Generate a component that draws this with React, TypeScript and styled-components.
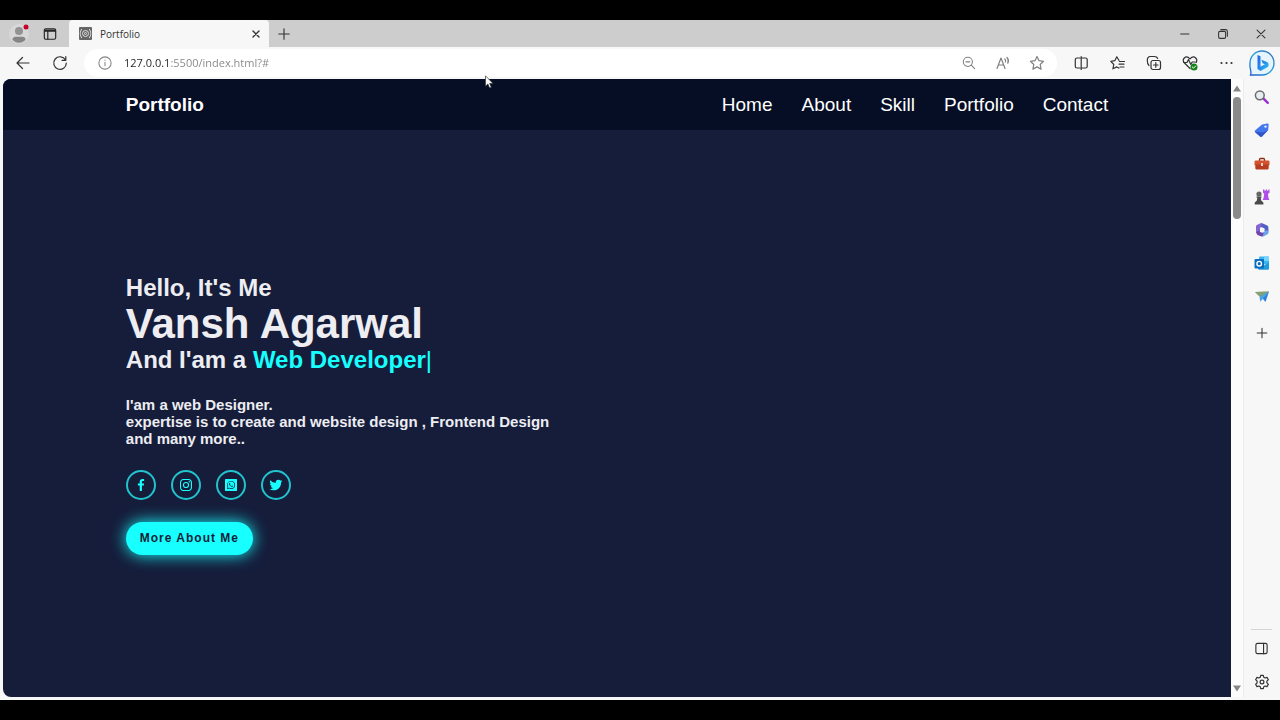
import React from 'react';
import styled, { createGlobalStyle } from 'styled-components';
import { BiLogoFacebook, BiLogoInstagram, BiLogoTwitter, BiLogoWhatsappSquare } from 'react-icons/bi';

const GlobalStyle = createGlobalStyle`
  * { box-sizing: border-box; }
  body { margin: 0; background: #000; }
  button { border: 0; padding: 0; background: none; color: inherit; font: inherit; cursor: pointer; }
  a { color: inherit; text-decoration: none; }
  svg { display: block; flex: none; }
`;

const Frame = styled.div`
  position: relative;
  display: flex;
  flex-direction: column;
  min-height: 100vh;
  padding: 20px 0;
  background: #000;
  color: #333;
  font-family: "Open Sans", "Noto Sans", sans-serif;
`;

const TabStrip = styled.header`
  display: flex;
  height: 27px;
  background: #cdcdcd;
`;

const StripTools = styled.div`
  display: flex;
  align-items: center;
  width: 69px;
  padding-left: 8px;
  gap: 13px;
`;

const Tab = styled.div`
  display: flex;
  align-items: center;
  width: 200px;
  padding: 0 6px 0 10px;
  gap: 8px;
  border-radius: 4px 4px 0 0;
  background: #f7f7f7;
  font-size: 10px;
  line-height: 14px;
`;

const TabTitle = styled.span`
  flex: 1;
`;

const IconButton = styled.button<{ $width?: number; $color?: string }>`
  display: flex;
  flex: none;
  align-items: center;
  justify-content: center;
  width: ${({ $width = 36 }) => $width}px;
  height: 100%;
  color: ${({ $color = '#333' }) => $color};
`;

const WindowControls = styled.div`
  display: flex;
  margin-left: auto;
`;

const Body = styled.div`
  display: flex;
  flex: 1;
  background: #f7f7f7;
`;

const Main = styled.div`
  display: flex;
  flex: 1;
  flex-direction: column;
  min-width: 0;
`;

const Toolbar = styled.div`
  display: flex;
  align-items: center;
  height: 32px;
  padding-left: 4px;
`;

const AddressBar = styled.div`
  display: flex;
  flex: 1;
  align-items: center;
  height: 28px;
  margin: 0 7px 0 6px;
  padding: 0 3px 0 14px;
  border-radius: 14px;
  background: #fff;
  color: #858585;
`;

const AddressInput = styled.input`
  flex: 1;
  min-width: 0;
  margin-left: 12px;
  padding: 0;
  border: 0;
  outline: 0;
  background: linear-gradient(90deg, #222 45px, #858585 45px);
  background-clip: text;
  -webkit-background-clip: text;
  -webkit-text-fill-color: transparent;
  color: #858585;
  font: 11px/16px "Open Sans", "Noto Sans", sans-serif;
`;

const Viewport = styled.div`
  display: flex;
  flex: 1;
  padding: 0 0 3px 3px;
`;

const Page = styled.div`
  display: flex;
  flex: 1;
  flex-direction: column;
  overflow: hidden;
  border-radius: 8px 0 0 8px;
  background: #151d3b;
  color: #ededf2;
  font-family: "Liberation Sans", Arial, sans-serif;
`;

const PageHeader = styled.div`
  display: flex;
  align-items: center;
  justify-content: space-between;
  height: 51px;
  padding: 1px 10% 0;
  background: #050e25;
  color: #fff;
  font-size: 19px;
  line-height: 22px;
`;

const Brand = styled.a`
  font-weight: 700;
`;

const Nav = styled.nav`
  display: flex;
  gap: 29px;
`;

const Hero = styled.main`
  display: flex;
  flex: 1;
  flex-direction: column;
  align-items: flex-start;
  justify-content: center;
  padding: 2px 10% 0;
`;

const Greeting = styled.h2`
  margin: 0;
  font-size: 24px;
  line-height: 26px;
`;

const Name = styled.h1`
  margin: 0;
  font-size: 42px;
  line-height: 46px;
`;

const Typed = styled.span`
  color: #17ffff;
`;

const Caret = styled.span`
  font-weight: 400;
`;

const Intro = styled.p`
  margin: 23px 0;
  font-size: 15px;
  font-weight: 700;
  line-height: 17px;
`;

const Socials = styled.div`
  display: flex;
  gap: 15px;
`;

const SocialLink = styled.a`
  display: flex;
  align-items: center;
  justify-content: center;
  width: 30px;
  height: 30px;
  border: 2px solid #22c3cd;
  border-radius: 50%;
  color: #17ffff;
`;

const MoreLink = styled.a`
  margin-top: 22px;
  padding: 9px 14px;
  border-radius: 17px;
  background: #17ffff;
  box-shadow: 0 0 16px #17ffff;
  color: #131d3a;
  font-size: 12px;
  font-weight: 700;
  letter-spacing: 1px;
  line-height: 15px;
`;

const ScrollTrack = styled.div`
  display: flex;
  flex-direction: column;
  align-items: center;
  width: 13px;
  padding: 6px 0 5px;
  border-right: 1px solid #ececec;
  background: #fcfcfc;
  color: #858585;
`;

const ScrollThumb = styled.div`
  width: 8px;
  height: 122px;
  margin: 5px 0 auto;
  border-radius: 4px;
  background: #8a8a8a;
`;

const SideBar = styled.aside`
  display: flex;
  flex-direction: column;
  width: 36px;
  padding-bottom: 2px;
`;

const SideSlot = styled.div<{ $height?: number }>`
  height: ${({ $height = 33 }) => $height}px;
`;

const AppList = styled.div`
  padding: 2px 0 4px;
`;

const SideFooter = styled.div`
  margin: auto 8px 0 7px;
  border-top: 1px solid #d5d5d5;
  padding-top: 2px;
  display: flex;
  flex-direction: column;
  align-items: center;
`;

const Pointer = styled.svg`
  position: absolute;
  left: 485px;
  top: 75px;
  pointer-events: none;
`;

type LineProps = { size?: number; width?: number; children: React.ReactNode };
const Line = ({ size = 16, width = 1.2, children }: LineProps) => (
  <svg width={size} height={size} viewBox="0 0 16 16" fill="none" stroke="currentColor" strokeWidth={width} strokeLinecap="round" strokeLinejoin="round" aria-hidden="true">
    {children}
  </svg>
);

const Art = ({ size = 16, children }: { size?: number; children: React.ReactNode }) => (
  <svg width={size} height={size} viewBox="0 0 16 16" aria-hidden="true">{children}</svg>
);

const apps = [
  {
    label: 'Search',
    art: <>
      <path d="M9.800 8.800l4 4" stroke="#9c2fd0" strokeWidth="2.4" strokeLinecap="round" />
      <circle cx="5.800" cy="5.300" r="4.400" fill="#e8edf0" stroke="#676c70" strokeWidth="1.500" />
    </>,
  },
  {
    label: 'Shopping',
    art: <>
      <path d="M8 1.500l5.200-1c1-.2 1.500.3 1.400 1.200l-.4 5.300-6 6.400c-.7.7-1.500.7-2.200 0L1.300 9.400c-.7-.7-.7-1.500 0-2.200z" fill="#4478ee" />
      <path d="M1 8.700l5.400 5c.5.300 1 .2 1.400-.2L14.200 7 9 9.500z" fill="#3553c8" />
      <circle cx="11.500" cy="3.600" r="1.200" fill="#e6eefc" />
    </>,
  },
  {
    label: 'Tools',
    art: <>
      <path d="M5.500 5V3.500c0-.6.4-1 1-1h3c.6 0 1 .4 1 1V5" fill="none" stroke="#8c2c18" strokeWidth="1.300" />
      <rect x=".5" y="4.500" width="15" height="5" rx="1.300" fill="#d4532f" />
      <path d="M1.300 8.500h13.400V12c0 .8-.5 1.500-1.300 1.500H2.600c-.8 0-1.300-.7-1.300-1.500z" fill="#b83c20" />
      <rect x="7" y="7" width="2" height="3" rx=".6" fill="#f1d7cb" />
    </>,
  },
  {
    label: 'Games',
    art: <>
      <path d="M9 .5h1.400v1.200h1.300V.5h1.400v1.200h1.200V.5h1.200v3.300l-1.500 1 .4 3.700 1 2.500H8.700l1-2.500.5-3.700L9 3.800z" fill="#b04fe8" />
      <circle cx="5" cy="5" r="2.600" fill="#666" />
      <path d="M2.500 7.600h5v1.200h-.8l.7 3 2 1.700V15.500H.700v-2l2-1.700.7-3h-.9z" fill="#4b4b4b" />
    </>,
  },
  {
    label: 'Microsoft 365',
    art: <>
      <path d="M8.500 2.700L4 4.500v6" fill="none" stroke="#8566cf" strokeWidth="4" strokeLinejoin="round" />
      <path d="M7.500 3l5 2.200v4" fill="none" stroke="#5260c4" strokeWidth="3.800" strokeLinejoin="round" />
      <path d="M12.700 8.500v2L8 13" fill="none" stroke="#6aa4e6" strokeWidth="3.800" strokeLinejoin="round" />
      <path d="M3.500 9.500L4.800 11.500 9 13" fill="none" stroke="#7046ad" strokeWidth="3.800" strokeLinejoin="round" />
    </>,
  },
  {
    label: 'Outlook',
    art: <>
      <rect x="5" y="1.500" width="10" height="8" rx="1" fill="#38b5ee" />
      <path d="M10 1.500h4c.6 0 1 .4 1 1V6h-5z" fill="#75d4fa" />
      <path d="M4 8l6 2.500L15 7.500V13.500c0 .8-.5 1.300-1.300 1.300H5.300c-.8 0-1.300-.5-1.300-1.300z" fill="#229bdd" />
      <rect x=".5" y="4" width="9.500" height="9.500" rx="1" fill="#0b6dbd" />
      <circle cx="5.200" cy="8.700" r="2.300" fill="none" stroke="#fff" strokeWidth="1.400" />
    </>,
  },
  {
    label: 'Drop',
    art: <>
      <path d="M1 4l14-.5-8 6z" fill="#b6ad4c" />
      <path d="M1 4l5 5L15 3.500z" fill="#81a07c" />
      <path d="M15 3.500L7.200 8.800 11.500 14z" fill="#2f7fdc" />
      <path d="M15 3.500L5.500 9l.8 4.800 2.200-2.500z" fill="#49a3e6" />
    </>,
  },
];

const socials = [
  { label: 'Facebook', Icon: BiLogoFacebook },
  { label: 'Instagram', Icon: BiLogoInstagram },
  { label: 'WhatsApp', Icon: BiLogoWhatsappSquare },
  { label: 'Twitter', Icon: BiLogoTwitter },
];

const STAR = 'M8 1.500l2 4.200 4.600.6-3.400 3.200.9 4.600L8 11.900l-4.100 2.200.9-4.600L1.400 6.300 6 5.700z';

export default function App() {
  return (
    <Frame>
      <GlobalStyle />
      <TabStrip>
        <StripTools>
          <IconButton $width={22} aria-label="Profile">
            <svg width="22" height="22" viewBox="0 0 22 22" aria-hidden="true">
              <circle cx="11" cy="11" r="10" fill="#d7d7d7" />
              <circle cx="11" cy="8" r="4" fill="#929292" />
              <path d="M4.500 16.500c0-2 1.500-2.800 3-2.800h7c1.500 0 3 .8 3 2.800-1 2-3.500 3.200-6.500 3.200s-5.500-1.200-6.500-3.200z" fill="#858585" />
              <circle cx="18" cy="4" r="2.500" fill="#c4002b" />
            </svg>
          </IconButton>
          <IconButton $width={14} $color="#222" aria-label="Tab actions">
            <Line size={14} width={1.3}>
              <rect x="1.500" y="2" width="13" height="12" rx="1.800" />
              <path d="M2 3.500h12M2 4.800h12M5.500 5v9" />
            </Line>
          </IconButton>
        </StripTools>
        <Tab>
          <svg width="13" height="13" viewBox="0 0 13 13" fill="none" stroke="#ddd" strokeWidth="1" aria-hidden="true">
            <rect width="13" height="13" rx="1" fill="#666" stroke="none" />
            <circle cx="6.500" cy="6.500" r="1" />
            <circle cx="6.500" cy="6.500" r="3" />
            <path d="M2.800 2C.8 4.500.8 8.500 2.800 11M10.200 2c2 2.500 2 6.500 0 9" />
          </svg>
          <TabTitle>Portfolio</TabTitle>
          <IconButton $width={14} aria-label="Close tab">
            <Line size={12} width={1.800}><path d="M4 4l8 8M12 4l-8 8" /></Line>
          </IconButton>
        </Tab>
        <IconButton $width={30} aria-label="New tab">
          <Line size={14} width={1.300}><path d="M8 2v12M2 8h12" /></Line>
        </IconButton>
        <WindowControls>
          <IconButton $width={38} aria-label="Minimize">
            <Line size={14}><path d="M3 8h9.500" /></Line>
          </IconButton>
          <IconButton $width={38} aria-label="Restore">
            <Line size={14}>
              <rect x="3" y="5" width="8" height="8" rx="1.500" />
              <path d="M5.500 3h5.300c1.300 0 2.200.9 2.200 2.200v5.300" />
            </Line>
          </IconButton>
          <IconButton $width={38} aria-label="Close">
            <Line size={14}><path d="M3.500 3.500l9 9M12.500 3.500l-9 9" /></Line>
          </IconButton>
        </WindowControls>
      </TabStrip>

      <Body>
        <Main>
          <Toolbar>
            <IconButton $width={37} aria-label="Back">
              <Line><path d="M14 8H2M7.500 2.500L2 8l5.500 5.500" /></Line>
            </IconButton>
            <IconButton $width={37} aria-label="Refresh">
              <Line><path d="M13.500 5A6.300 6.300 0 1 0 14.300 8M13.800 1.500V5.300H10" /></Line>
            </IconButton>
            <AddressBar>
              <Line size={14}>
                <circle cx="8" cy="8" r="7" />
                <path d="M8 7.200v4M8 4.500v.3" />
              </Line>
              <AddressInput aria-label="Address" defaultValue="127.0.0.1:5500/index.html?#" spellCheck={false} />
              <IconButton $width={34} $color="#808080" aria-label="Zoom out">
                <Line size={14}><circle cx="6.700" cy="6.700" r="5.200" /><path d="M10.500 10.500l4 4M4.500 6.700h4.400" /></Line>
              </IconButton>
              <IconButton $width={34} $color="#808080" aria-label="Read aloud">
                <Line><path d="M2 13.500L6 3l4 10.500M3.500 10h5M9.800 4c.8.800 1 2 .6 3M12 2.500c1.500 1.700 1.800 3.800.8 5.800" /></Line>
              </IconButton>
              <IconButton $width={34} $color="#808080" aria-label="Add to favorites">
                <Line><path d={STAR} /></Line>
              </IconButton>
            </AddressBar>
            <IconButton aria-label="Split screen">
              <Line>
                <path d="M6 3H3C2 3 1.300 3.600 1.300 4.500v7C1.300 12.400 2 13 3 13h3M8 3h3.500c1 0 1.700.6 1.700 1.500v7c0 .9-.7 1.500-1.700 1.500H8M7.200 1.500v13" />
              </Line>
            </IconButton>
            <IconButton aria-label="Favorites">
              <Line><path d="M9 5.500L6.800 1.800 4.800 5.700l-4 .6 3 3.200-.9 4.300 3.900-1.900 2 1.200M9.500 6.500h5M9 9.200h5M10 12h4" /></Line>
            </IconButton>
            <IconButton aria-label="Collections">
              <Line>
                <rect x="5" y="5.500" width="9.500" height="9" rx="2" />
                <path d="M9.800 7.700v4.600M7.500 10h4.600M3 10.500C2 9.700 1.300 8 1.300 5.500c0-2.500 1-4 3-4h4c2 0 3 .7 3.400 2" />
              </Line>
            </IconButton>
            <IconButton aria-label="Browser essentials">
              <Line>
                <path d="M8 13.500L2.500 8C1 6.300 1 4.300 2.300 3 3.800 1.600 6 1.700 8 3.800c2-2.100 4.200-2.200 5.700-.8 1.200 1.200 1.300 2.900.5 4.400M1.500 7.500H5l1.500-3 2.300 5 1.400-2.500h3" />
                <circle cx="12" cy="12" r="3.500" fill="#17821c" stroke="none" />
                <path d="M10.300 12l1.200 1.200 2.200-2.300" stroke="#fff" strokeWidth="1" />
              </Line>
            </IconButton>
            <IconButton aria-label="Settings and more">
              <Line>
                <g fill="currentColor" stroke="none">
                  <circle cx="3.500" cy="8" r="1.100" /><circle cx="8.500" cy="8" r="1.100" /><circle cx="13.500" cy="8" r="1.100" />
                </g>
              </Line>
            </IconButton>
          </Toolbar>

          <Viewport>
            <Page>
              <PageHeader>
                <Brand href="#">Portfolio</Brand>
                <Nav>
                  {['Home', 'About', 'Skill', 'Portfolio', 'Contact'].map((item) => (
                    <a key={item} href={`#${item.toLowerCase()}`}>{item}</a>
                  ))}
                </Nav>
              </PageHeader>
              <Hero>
                <Greeting>Hello, It's Me</Greeting>
                <Name>Vansh Agarwal</Name>
                <Greeting>And I'am a <Typed>Web Developer<Caret>|</Caret></Typed></Greeting>
                <Intro>
                  I'am a web Designer.<br />
                  expertise is to create and website design , Frontend Design<br />
                  and many more..
                </Intro>
                <Socials>
                  {socials.map(({ label, Icon }) => (
                    <SocialLink key={label} href="#" aria-label={label}><Icon size={16} /></SocialLink>
                  ))}
                </Socials>
                <MoreLink href="#about">More About Me</MoreLink>
              </Hero>
            </Page>
            <ScrollTrack>
              <svg width="8" height="7" viewBox="0 0 8 7" aria-hidden="true"><path d="M4 .5L8 6.500H0z" fill="currentColor" /></svg>
              <ScrollThumb />
              <svg width="8" height="7" viewBox="0 0 8 7" aria-hidden="true"><path d="M4 6.500L8 .5H0z" fill="currentColor" /></svg>
            </ScrollTrack>
          </Viewport>
        </Main>

        <SideBar>
          <SideSlot $height={32}>
            <IconButton aria-label="Bing">
              <svg width="26" height="26" viewBox="0 0 26 26" aria-hidden="true">
                <defs>
                  <linearGradient id="ring" x1="0" y1="1" x2="1" y2="0">
                    <stop offset="0" stopColor="#2060c8" /><stop offset=".5" stopColor="#2a9fd8" /><stop offset="1" stopColor="#3b69bd" />
                  </linearGradient>
                  <linearGradient id="letter" x1="0" y1="0" x2="1" y2="1">
                    <stop offset="0" stopColor="#2866e0" /><stop offset=".5" stopColor="#2388e8" /><stop offset="1" stopColor="#38c7ee" />
                  </linearGradient>
                </defs>
                <path d="M1.500 25c.8-2 .5-3.500 0-5.500C.9 17.500.8 15.500 1 13A12 12 0 1 1 13 25z" fill="#e6f5fc" stroke="url(#ring)" strokeWidth="1.300" />
                <path d="M8.500 5l3 1.300v10.500l4.500-2.500-2.400-1.100-1.300-3.400 5.700 2.100c2 .9 2.300 4.200.4 5.400L11.500 21 8.500 19z" fill="url(#letter)" />
              </svg>
            </IconButton>
          </SideSlot>
          <AppList>
            {apps.map(({ label, art }) => (
              <SideSlot key={label}>
                <IconButton aria-label={label}><Art>{art}</Art></IconButton>
              </SideSlot>
            ))}
          </AppList>
          <SideSlot>
            <IconButton aria-label="Customize"><Line size={14}><path d="M8 2.500v11M2.500 8h11" /></Line></IconButton>
          </SideSlot>
          <SideFooter>
            <SideSlot>
              <IconButton aria-label="Hide sidebar">
                <Line size={15}><rect x="2" y="2.500" width="12" height="11" rx="1.800" /><path d="M10.200 2.500v11" /></Line>
              </IconButton>
            </SideSlot>
            <SideSlot>
              <IconButton aria-label="Settings">
                <Line>
                  <circle cx="8" cy="8" r="1.900" />
                  <path d="M6.700 1.300h2.600l.5 2 1.200.7 2-.6 1.400 2.300L12.900 7.200v1.600l1.500 1.500-1.400 2.300-2-.6-1.200.7-.5 2H6.700l-.5-2L5 12l-2 .6-1.400-2.300 1.500-1.500V7.200L1.600 5.700 3 3.400l2 .6 1.200-.7z" />
                </Line>
              </IconButton>
            </SideSlot>
          </SideFooter>
        </SideBar>
      </Body>

      <Pointer width="9" height="14" viewBox="0 0 9 14" aria-hidden="true">
        <path d="M.5.8v10.400l2.400-2.200 1.700 4 1.700-.8-1.700-3.700H8z" fill="#fff" stroke="#333" strokeWidth=".7" />
      </Pointer>
    </Frame>
  );
}
